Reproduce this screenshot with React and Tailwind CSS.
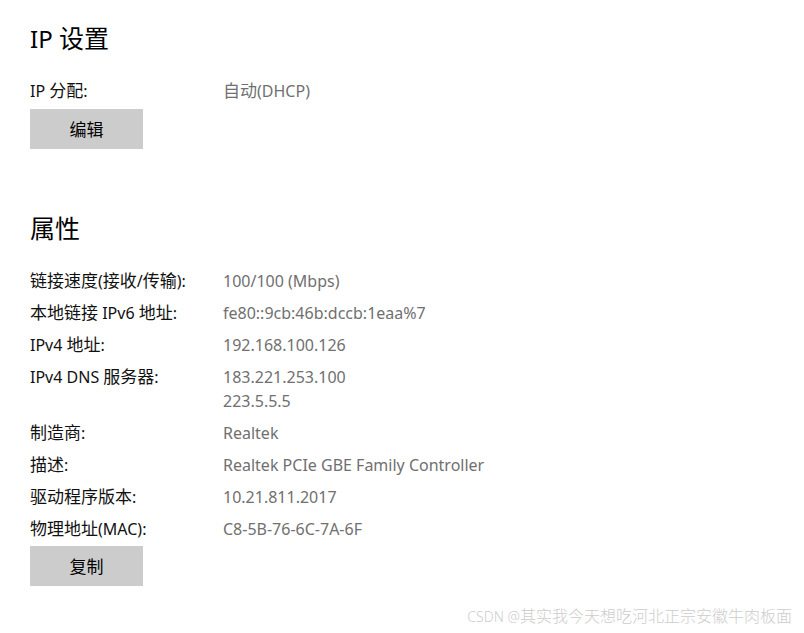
import React from "react";

// CJK runs render a bit larger than the Latin text, like YaHei next to Segoe UI
const CJK = /([\u3000-\u9fff\uff00-\uffef]+)/;

function Mixed({ text, cjk = "text-[17px]" }) {
  return text.split(CJK).map((part, i) =>
    CJK.test(part) ? (
      <span key={i} className={cjk}>
        {part}
      </span>
    ) : (
      <React.Fragment key={i}>{part}</React.Fragment>
    )
  );
}

const props = [
  { label: "链接速度(接收/传输):", value: ["100/100 (Mbps)"] },
  { label: "本地链接 IPv6 地址:", value: ["fe80::9cb:46b:dccb:1eaa%7"] },
  { label: "IPv4 地址:", value: ["192.168.100.126"] },
  { label: "IPv4 DNS 服务器:", value: ["183.221.253.100", "223.5.5.5"] },
  { label: "制造商:", value: ["Realtek"] },
  { label: "描述:", value: ["Realtek PCIe GBE Family Controller"] },
  { label: "驱动程序版本:", value: ["10.21.811.2017"] },
  { label: "物理地址(MAC):", value: ["C8-5B-76-6C-7A-6F"] },
];

function Row({ label, value }) {
  return (
    <div className="grid grid-cols-[193px_1fr] py-1 leading-6">
      <div className="text-[#111]">
        <Mixed text={label} />
      </div>
      <div className="text-[#707070]">
        {value.map((v) => (
          <div key={v}>
            <Mixed text={v} />
          </div>
        ))}
      </div>
    </div>
  );
}

function GrayButton({ children }) {
  return (
    <button className="w-[113px] h-10 bg-[#cccccc] text-black text-[17px] leading-none">
      {children}
    </button>
  );
}

export default function App() {
  return (
    <div
      className="relative w-[804px] h-[633px] bg-white overflow-hidden pl-[30px] pt-5 text-[16px]"
      style={{ fontFamily: '"Noto Sans", "Noto Sans CJK SC", sans-serif' }}
    >
      <h1 className="h-9 text-[24px] leading-9 text-black">
        <Mixed text="IP 设置" cjk="text-[25px]" />
      </h1>

      <div className="mt-[23px] grid grid-cols-[193px_1fr] leading-6">
        <div className="text-[#111]">
          <Mixed text="IP 分配:" />
        </div>
        <div className="text-[#707070]">
          <Mixed text="自动(DHCP)" />
        </div>
      </div>
      <div className="mt-1.5">
        <GrayButton>编辑</GrayButton>
      </div>

      <h2 className="mt-[61px] h-9 text-[25px] leading-9 text-black">属性</h2>

      <div className="mt-[19px] flex flex-col">
        {props.map((p) => (
          <Row key={p.label} {...p} />
        ))}
      </div>
      <div className="mt-px">
        <GrayButton>复制</GrayButton>
      </div>

      <div className="absolute right-3 bottom-[6px] text-[14px] leading-5 text-[#cdcdcd] font-light whitespace-nowrap">
        CSDN @<Mixed text="其实我今天想吃河北正宗安徽牛肉板面" cjk="text-[16px]" />
      </div>
    </div>
  );
}
